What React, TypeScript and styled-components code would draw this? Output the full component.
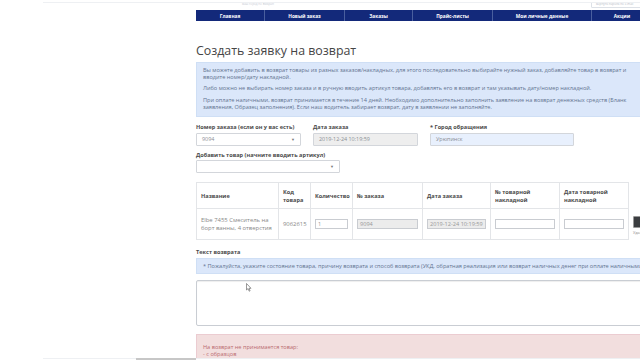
import styled, { createGlobalStyle } from "styled-components";

const GlobalStyle = createGlobalStyle`
  html, body {
    margin: 0;
    padding: 0;
    background: #ffffff;
    overflow: hidden;
  }
  body {
    font-family: "Open Sans", "Liberation Sans", sans-serif;
    color: #555;
  }
`;

const Page = styled.div`
  margin-left: 43px;
  margin-top: 2px;
  width: 900px;
  height: 355px;
  border-top: 1px solid #eef0f3;
  border-bottom: 1px solid #eef0f3;
  display: grid;
  grid-template-columns: 153px 1fr;
  overflow: hidden;
`;

const Sidebar = styled.div``;

const Main = styled.div`
  display: flex;
  flex-direction: column;
`;

const TopStrip = styled.div`
  height: 7px;
  display: flex;
  align-items: flex-start;
  font-size: 3px;
  color: #c6cad3;
`;

const TopHint = styled.span`
  margin-left: 46px;
  margin-top: -1px;
`;

const SearchBox = styled.div`
  width: 60px;
  height: 6px;
  margin-top: -3px;
  margin-left: auto;
  margin-right: 286px;
  border: 1px solid #dde1e7;
  border-radius: 1px;
  font-size: 3px;
  line-height: 6px;
  padding-left: 4px;
  color: #b4bac6;
  white-space: nowrap;
`;

const Nav = styled.nav`
  display: flex;
  height: 11px;
  background: #13297a;
`;

const NavItem = styled.div<{ $w: number }>`
  width: ${(p) => p.$w}px;
  flex: none;
  border-right: 1px solid #4a5f9e;
  color: #fff;
  font-size: 4.8px;
  font-weight: 700;
  display: flex;
  align-items: center;
  justify-content: center;
`;

const Content = styled.div`
  width: 560px;
  display: flex;
  flex-direction: column;
`;

const Title = styled.h1`
  margin: 21px 0 0 0;
  font-size: 12.4px;
  font-weight: 400;
  color: #454545;
  line-height: 18px;
  height: 20px;
  white-space: nowrap;
`;

const InfoBox = styled.div<{ $tone?: "blue" | "red" }>`
  background: ${(p) => (p.$tone === "red" ? "#f2dede" : "#dbe7fa")};
  border: 1px solid ${(p) => (p.$tone === "red" ? "#ebccd1" : "#cfdff5")};
  color: ${(p) => (p.$tone === "red" ? "#b96a6f" : "#627390")};
  font-size: 5.6px;
  line-height: 6.6px;
  padding: 4px 6px 6px;
  width: 520px;
  box-sizing: border-box;
  p {
    margin: 0 0 5.2px 0;
    white-space: nowrap;
  }
  p:last-child {
    margin-bottom: 0;
  }
`;

const Row = styled.div<{ $mt: number }>`
  display: flex;
  gap: 12px;
  margin-top: ${(p) => p.$mt}px;
`;

const Field = styled.div<{ $w: number }>`
  width: ${(p) => p.$w}px;
  display: flex;
  flex-direction: column;
`;

const Label = styled.div<{ $mt?: number }>`
  font-size: 5.6px;
  font-weight: 700;
  color: #4a4a4a;
  line-height: 7.5px;
  height: 7.5px;
  margin-top: ${(p) => p.$mt ?? 0}px;
  margin-bottom: 1px;
  white-space: nowrap;
`;

const Input = styled.div<{ $bg?: string }>`
  height: 13px;
  box-sizing: border-box;
  border: 1px solid #d3d6db;
  border-radius: 1px;
  background: ${(p) => p.$bg ?? "#fff"};
  font-size: 5.4px;
  color: #8a8e94;
  display: flex;
  align-items: center;
  justify-content: space-between;
  padding: 0 5px;
  white-space: nowrap;
`;

const Caret = styled.span`
  font-size: 4px;
  color: #777;
`;

const Table = styled.table`
  border-collapse: collapse;
  table-layout: fixed;
  width: 432px;
  font-size: 5.9px;
  color: #555;
  td, th {
    border: 1px solid #e3e5e8;
    text-align: left;
    padding: 0 4px;
    line-height: 8px;
    vertical-align: middle;
  }
  th {
    height: 25px;
    font-weight: 700;
    color: #4a4a4a;
    font-size: 5.6px;
  }
  td {
    height: 30px;
    color: #888;
  }
`;

const CellInput = styled.div<{ $grey?: boolean }>`
  width: 100%;
  height: 10px;
  box-sizing: border-box;
  border: 1px solid #c9ccd1;
  background: ${(p) => (p.$grey ? "#ececec" : "#fff")};
  color: #999;
  font-size: 5.6px;
  line-height: 8px;
  padding-left: 2px;
  white-space: nowrap;
  overflow: hidden;
`;

const TableWrap = styled.div`
  display: flex;
  align-items: flex-end;
  gap: 4px;
  margin-top: 9px;
`;

const DeleteBtn = styled.div`
  display: flex;
  flex-direction: column;
  align-items: flex-start;
  margin-bottom: 5px;
  font-size: 3.6px;
  line-height: 4px;
  color: #888;
  white-space: nowrap;
  div {
    width: 7px;
    height: 10px;
    background: #3b3d40;
    border: 1px solid #999;
    border-radius: 1px;
    margin-bottom: 3px;
  }
`;

const TextArea = styled.div`
  width: 520px;
  height: 46px;
  box-sizing: border-box;
  border: 1px solid #c9cdd3;
  border-radius: 2px;
  box-shadow: inset 0 1px 1px rgba(0, 0, 0, 0.07);
  margin-top: 6px;
  position: relative;
`;

const Cursor = styled.svg`
  position: absolute;
  left: 49px;
  top: 2px;
`;

const BottomBar = styled.div`
  position: fixed;
  left: 136px;
  bottom: 0;
  width: 60px;
  height: 2px;
  background: #c7c7c7;
`;

const navItems: [string, number][] = [
  ["Главная", 68],
  ["Новый заказ", 79],
  ["Заказы", 67],
  ["Прайс-листы", 79],
  ["Мои личные данные", 98],
  ["Акции", 60],
];

const cols = [82, 32, 42, 70, 68, 69, 69];

const App = () => {
  return (
    <>
      <GlobalStyle />
      <Page>
        <Sidebar />
        <Main>
          <TopStrip>
            <TopHint>Ваш город не выбран</TopHint>
            <SearchBox>Вернуть пароль по e-mail</SearchBox>
          </TopStrip>
          <Nav>
            {navItems.map(([t, w]) => (
              <NavItem key={t} $w={w}>
                {t}
              </NavItem>
            ))}
          </Nav>
          <Content>
            <Title>Создать заявку на возврат</Title>
            <InfoBox>
              <p>
                Вы можете добавить в возврат товары из разных заказов/накладных, для этого последовательно выбирайте нужный заказ, добавляйте товар в возврат и
                <br />
                вводите номер/дату накладной.
              </p>
              <p>
                Либо можно не выбирать номер заказа и в ручную вводить артикул товара, добавлять его в возврат и там указывать дату/номер накладной.
              </p>
              <p>
                При оплате наличными, возврат принимается в течение 14 дней. Необходимо дополнительно заполнить заявление на возврат денежных средств (Бланк
                <br />
                заявления, Образец заполнения). Если наш водитель забирает возврат, дату в заявлении не заполняйте.
              </p>
            </InfoBox>
            <Row $mt={7}>
              <Field $w={105}>
                <Label>Номер заказа (если он у вас есть)</Label>
                <Input>
                  9094 <Caret>▼</Caret>
                </Input>
              </Field>
              <Field $w={105}>
                <Label>Дата заказа</Label>
                <Input $bg="#eeeeee">2019-12-24 10:19:59</Input>
              </Field>
              <Field $w={144}>
                <Label>* Город обращения</Label>
                <Input $bg="#e8f0fd">Урюпинск</Input>
              </Field>
            </Row>
            <Row $mt={6}>
              <Field $w={144}>
                <Label>Добавить товар (начните вводить артикул)</Label>
                <Input>
                  <span />
                  <Caret>▼</Caret>
                </Input>
              </Field>
            </Row>
            <TableWrap>
              <Table>
                <colgroup>
                  {cols.map((w, i) => (
                    <col key={i} style={{ width: w }} />
                  ))}
                </colgroup>
                <thead>
                  <tr>
                    <th>Название</th>
                    <th>Код<br />товара</th>
                    <th>Количество</th>
                    <th>№ заказа</th>
                    <th>Дата заказа</th>
                    <th>№ товарной<br />накладной</th>
                    <th>Дата товарной<br />накладной</th>
                  </tr>
                </thead>
                <tbody>
                  <tr>
                    <td>Elbe 7455 Смеситель на<br />борт ванны, 4 отверстия</td>
                    <td>9062615</td>
                    <td><CellInput>1</CellInput></td>
                    <td><CellInput $grey>9094</CellInput></td>
                    <td><CellInput $grey>2019-12-24 10:19:59</CellInput></td>
                    <td><CellInput /></td>
                    <td><CellInput /></td>
                  </tr>
                </tbody>
              </Table>
              <DeleteBtn>
                <div />
                Удалить
              </DeleteBtn>
            </TableWrap>
            <Label $mt={9}>Текст возврата</Label>
            <InfoBox style={{ paddingTop: 4, paddingBottom: 4 }}>
              <p>
                * Пожалуйста, укажите состояние товара, причину возврата и способ возврата (УКД, обратная реализация или возврат наличных денег при оплате наличными)
              </p>
            </InfoBox>
            <TextArea>
              <Cursor width="6" height="9" viewBox="0 0 6 9">
                <path d="M0.5 0.5 L0.5 7 L2 5.6 L3.2 8.2 L4.1 7.8 L3 5.3 L5 5.3 Z" fill="#fff" stroke="#555" strokeWidth="0.6" />
              </Cursor>
            </TextArea>
            <InfoBox $tone="red" style={{ marginTop: 8, height: 40, paddingTop: 9 }}>
              <p style={{ marginBottom: 0 }}>На возврат не принимается товар:</p>
              <p>- с образцов</p>
            </InfoBox>
          </Content>
        </Main>
      </Page>
      <BottomBar />
    </>
  );
};

export default App;
